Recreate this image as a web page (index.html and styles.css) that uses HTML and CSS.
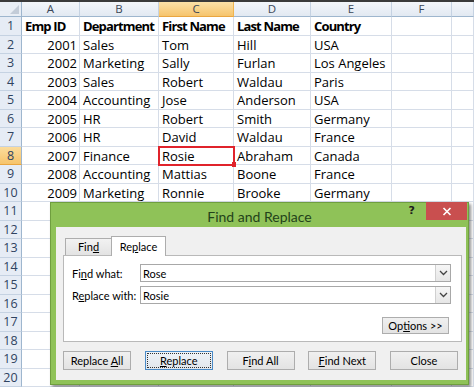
FILE: index.html
```html
<!DOCTYPE html>
<html>
<head>
<meta charset="utf-8">
<link rel="stylesheet" href="styles.css">
</head>
<body>
<div class="screen">
  <div class="topbar"></div>
  <div class="grid">
    <div class="corner"><span class="tri"></span></div>
    <div class="ch">A</div><div class="ch">B</div><div class="ch csel">C</div><div class="ch">D</div><div class="ch">E</div><div class="ch">F</div><div class="ch"></div>

    <div class="rh">1</div><div class="c b">Emp ID</div><div class="c b">Department</div><div class="c b">First Name</div><div class="c b">Last Name</div><div class="c b">Country</div><div class="c"></div><div class="c"></div>
    <div class="rh">2</div><div class="c n">2001</div><div class="c">Sales</div><div class="c">Tom</div><div class="c">Hill</div><div class="c">USA</div><div class="c"></div><div class="c"></div>
    <div class="rh">3</div><div class="c n">2002</div><div class="c">Marketing</div><div class="c">Sally</div><div class="c">Furlan</div><div class="c">Los Angeles</div><div class="c"></div><div class="c"></div>
    <div class="rh">4</div><div class="c n">2003</div><div class="c">Sales</div><div class="c">Robert</div><div class="c">Waldau</div><div class="c">Paris</div><div class="c"></div><div class="c"></div>
    <div class="rh">5</div><div class="c n">2004</div><div class="c">Accounting</div><div class="c">Jose</div><div class="c">Anderson</div><div class="c">USA</div><div class="c"></div><div class="c"></div>
    <div class="rh">6</div><div class="c n">2005</div><div class="c">HR</div><div class="c">Robert</div><div class="c">Smith</div><div class="c">Germany</div><div class="c"></div><div class="c"></div>
    <div class="rh">7</div><div class="c n">2006</div><div class="c">HR</div><div class="c">David</div><div class="c">Waldau</div><div class="c">France</div><div class="c"></div><div class="c"></div>
    <div class="rh rsel">8</div><div class="c n">2007</div><div class="c">Finance</div><div class="c active">Rosie</div><div class="c">Abraham</div><div class="c">Canada</div><div class="c"></div><div class="c"></div>
    <div class="rh">9</div><div class="c n">2008</div><div class="c">Accounting</div><div class="c">Mattias</div><div class="c">Boone</div><div class="c">France</div><div class="c"></div><div class="c"></div>
    <div class="rh">10</div><div class="c n">2009</div><div class="c">Marketing</div><div class="c">Ronnie</div><div class="c">Brooke</div><div class="c">Germany</div><div class="c"></div><div class="c"></div>
    <div class="rh">11</div><div class="c"></div><div class="c"></div><div class="c"></div><div class="c"></div><div class="c"></div><div class="c"></div><div class="c"></div>
    <div class="rh">12</div><div class="c"></div><div class="c"></div><div class="c"></div><div class="c"></div><div class="c"></div><div class="c"></div><div class="c"></div>
    <div class="rh">13</div><div class="c"></div><div class="c"></div><div class="c"></div><div class="c"></div><div class="c"></div><div class="c"></div><div class="c"></div>
    <div class="rh">14</div><div class="c"></div><div class="c"></div><div class="c"></div><div class="c"></div><div class="c"></div><div class="c"></div><div class="c"></div>
    <div class="rh">15</div><div class="c"></div><div class="c"></div><div class="c"></div><div class="c"></div><div class="c"></div><div class="c"></div><div class="c"></div>
    <div class="rh">16</div><div class="c"></div><div class="c"></div><div class="c"></div><div class="c"></div><div class="c"></div><div class="c"></div><div class="c"></div>
    <div class="rh">17</div><div class="c"></div><div class="c"></div><div class="c"></div><div class="c"></div><div class="c"></div><div class="c"></div><div class="c"></div>
    <div class="rh">18</div><div class="c"></div><div class="c"></div><div class="c"></div><div class="c"></div><div class="c"></div><div class="c"></div><div class="c"></div>
    <div class="rh">19</div><div class="c"></div><div class="c"></div><div class="c"></div><div class="c"></div><div class="c"></div><div class="c"></div><div class="c"></div>
    <div class="rh">20</div><div class="c"></div><div class="c"></div><div class="c"></div><div class="c"></div><div class="c"></div><div class="c"></div><div class="c"></div>
  </div>

  <div class="dialog">
    <div class="titlebar">
      <div></div>
      <div class="title">Find and Replace</div>
      <div class="controls">
        <span class="help">?</span>
        <span class="close"><svg width="10" height="9" viewBox="0 0 10 9"><path d="M1.5 1 L8.5 8 M8.5 1 L1.5 8" stroke="#fff" stroke-width="1.6" fill="none"/></svg></span>
      </div>
    </div>
    <div class="body">
      <div class="tabs">
        <div class="tab"><span>Fin<u>d</u></span></div>
        <div class="tab active"><span>Re<u>p</u>lace</span></div>
      </div>
      <div class="panel">
        <div class="field">
          <span class="label">Fi<u>n</u>d what:</span>
          <div class="combo"><span class="val">Rose</span><span class="drop"><svg width="9" height="6" viewBox="0 0 9 6"><path d="M1 1 L4.5 4.5 L8 1" stroke="#444" stroke-width="1.3" fill="none"/></svg></span></div>
        </div>
        <div class="field">
          <span class="label">R<u>e</u>place with:</span>
          <div class="combo"><span class="val">Rosie</span><span class="drop"><svg width="9" height="6" viewBox="0 0 9 6"><path d="M1 1 L4.5 4.5 L8 1" stroke="#444" stroke-width="1.3" fill="none"/></svg></span></div>
        </div>
        <div class="optrow"><span class="btn opt"><span>Op<u>t</u>ions &gt;&gt;</span></span></div>
      </div>
      <div class="buttons">
        <span class="btn"><span>Replace <u>A</u>ll</span></span>
        <span class="btn focus"><span class="dots"><span><u>R</u>eplace</span></span></span>
        <span class="btn"><span>F<u>i</u>nd All</span></span>
        <span class="btn"><span><u>F</u>ind Next</span></span>
        <span class="btn"><span>Close</span></span>
      </div>
    </div>
  </div>
</div>
</body>
</html>
```
FILE: styles.css
```css
html, body {
  margin: 0;
  padding: 0;
  background: #ffffff;
}
.screen {
  position: relative;
  width: 474px;
  height: 387px;
  overflow: hidden;
  font-family: Lato, "Liberation Sans", sans-serif;
}
.topbar {
  height: 2px;
  background: #3a3a3a;
}
.grid {
  display: grid;
  grid-template-columns: 22px 58px 79px 75px 77px 81px 60px 1fr;
  grid-template-rows: 15px repeat(20, 18.5px);
}
.corner {
  position: relative;
  background: #e9eef5;
  border-right: 1px solid #9eb6ce;
  border-bottom: 1px solid #9eb6ce;
  box-sizing: border-box;
}
.tri {
  position: absolute;
  right: 2px;
  bottom: 2px;
  width: 0;
  height: 0;
  border-left: 9px solid transparent;
  border-bottom: 9px solid #c3ccd8;
}
.ch {
  box-sizing: border-box;
  background: linear-gradient(#f3f6fa, #e2e9f2);
  border-right: 1px solid #c5d2e2;
  border-bottom: 1px solid #9eb6ce;
  font-family: "Open Sans", sans-serif;
  font-size: 11.5px;
  color: #3a4656;
  text-align: center;
  line-height: 14px;
}
.ch.csel {
  background: linear-gradient(#fbe1a8, #f6c46c);
  border-right-color: #f0b550;
  border-bottom-color: #e9a640;
}
.rh {
  box-sizing: border-box;
  background: #e6ecf5;
  border-right: 1px solid #9eb6ce;
  border-bottom: 1px solid #c5d2e2;
  font-family: "Open Sans", sans-serif;
  font-size: 12.5px;
  color: #2f4360;
  text-align: center;
  line-height: 18px;
}
.rh.rsel {
  background: linear-gradient(#fbdc9c, #f6c46c);
  border-bottom-color: #e9a640;
}
.c {
  box-sizing: border-box;
  border-right: 1px solid #d6dde8;
  border-bottom: 1px solid #d6dde8;
  font-family: "Open Sans", sans-serif;
  font-size: 13px;
  color: #000;
  line-height: 18px;
  padding-left: 3px;
  white-space: nowrap;
  overflow: visible;
}
.c.b { font-weight: 700; letter-spacing: -0.85px; }
.c.n { text-align: right; padding-right: 2px; padding-left: 0; }
.c.active {
  position: relative;
  outline: 2px solid #e0232b;
  outline-offset: -1px;
  z-index: 2;
}
.c.active::after {
  content: "";
  position: absolute;
  right: -3px;
  bottom: -3px;
  width: 4px;
  height: 5px;
  background: #e0232b;
}

/* Dialog */
.dialog {
  position: absolute;
  left: 50px;
  top: 202px;
  width: 419px;
  height: 183px;
  box-sizing: border-box;
  background: #8fc258;
  border: 1px solid #6f9e3f;
  display: flex;
  flex-direction: column;
  box-shadow: 2px 2px 3px rgba(0,0,0,0.45);
  z-index: 5;
}
.titlebar {
  height: 24px;
  display: grid;
  grid-template-columns: 1fr auto 1fr;
  align-items: center;
}
.title {
  font-size: 14px;
  color: #23421a;
  padding-top: 2px;
}
.controls {
  display: flex;
  justify-content: flex-end;
  align-items: flex-start;
  align-self: start;
  height: 100%;
}
.help {
  font-family: "DejaVu Sans", sans-serif;
  font-weight: 700;
  font-size: 11px;
  color: #1c1c1c;
  margin-right: 11px;
  margin-top: 1px;
}
.close {
  width: 41px;
  height: 18px;
  margin-top: -1px;
  margin-right: 1px;
  background: #c94f4f;
  display: flex;
  align-items: center;
  justify-content: center;
}
.body {
  flex: 1;
  margin: 0 2px 4px 5px;
  background: #f0f0f0;
  padding: 9px 4px 0 7px;
  display: flex;
  flex-direction: column;
  font-size: 11px;
  color: #000;
}
.tabs {
  display: flex;
  align-items: flex-end;
  height: 19px;
  padding-left: 2px;
  position: relative;
  z-index: 1;
}
.tab {
  box-sizing: border-box;
  width: 47px;
  height: 17px;
  border: 1px solid #adadad;
  border-bottom: none;
  background: linear-gradient(#f2f2f2, #e3e3e3);
  text-align: center;
  line-height: 16px;
}
.tab.active {
  width: 55px;
  height: 20px;
  margin-left: -1px;
  margin-bottom: -1px;
  background: #ffffff;
  line-height: 19px;
}
.panel {
  box-sizing: border-box;
  height: 87px;
  border: 1px solid #b9b9b9;
  background: #ffffff;
  padding: 8px 10px 0 8px;
  display: flex;
  flex-direction: column;
  gap: 4px;
}
.field {
  display: flex;
  align-items: center;
  height: 18px;
}
.label {
  width: 68px;
}
.combo {
  flex: 1;
  box-sizing: border-box;
  height: 18px;
  border: 1px solid #a8a8a8;
  background: #fff;
  display: flex;
  align-items: center;
}
.val {
  flex: 1;
  padding-left: 2px;
}
.drop {
  box-sizing: border-box;
  width: 15px;
  height: 16px;
  border-left: 1px solid #d0d0d0;
  background: linear-gradient(#f6f6f6, #e6e6e6);
  display: flex;
  align-items: center;
  justify-content: center;
}
.optrow {
  display: flex;
  justify-content: flex-end;
  margin-top: 9px;
  padding-right: 2px;
}
.btn {
  box-sizing: border-box;
  width: 68px;
  height: 19px;
  border: 1px solid #adadad;
  background: linear-gradient(#f0f0f0, #e3e3e3);
  display: flex;
  align-items: center;
  justify-content: center;
  font-size: 11px;
  white-space: nowrap;
}
.btn.opt {
  width: 67px;
  height: 17px;
}
.buttons {
  display: flex;
  justify-content: space-between;
  margin-top: 9px;
  padding-right: 4px;
}
.btn.focus {
  border-color: #4a8ac6;
  background: linear-gradient(#eef3f8, #e1e6ec);
  padding: 1px;
}
.dots {
  flex: 1;
  align-self: stretch;
  border: 1px dotted #333;
  display: flex;
  align-items: center;
  justify-content: center;
}
```
